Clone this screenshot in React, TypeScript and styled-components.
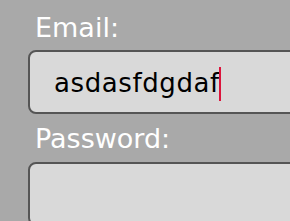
import * as React from "react";
import styled, { createGlobalStyle } from "styled-components";

const GlobalStyle = createGlobalStyle`
  html, body {
    margin: 0;
    padding: 0;
    background-color: #a9a9a9;
    overflow: hidden;
  }
`;

const StyledForm = styled.form`
  display: flex;
  flex-direction: column;
  align-items: flex-start;
  padding: 12px 0 0 28px;
  font-family: "DejaVu Sans", Verdana, sans-serif;
`;

const StyledLabel = styled.label<{ $gap: number }>`
  display: block;
  margin: ${props => props.$gap}px 0 0 7px;
  color: #ffffff;
  font-size: 27px;
  line-height: 31px;
`;

const StyledFieldWrap = styled.div<{ $gap: number }>`
  position: relative;
  margin-top: ${props => props.$gap}px;
`;

const StyledInput = styled.input`
  box-sizing: border-box;
  width: 320px;
  height: 64px;
  padding: 1px 20px 0 24px;
  background-color: #d9d9d9;
  border: 2.5px solid #555555;
  border-radius: 8px;
  color: #000000;
  font-family: "DejaVu Sans", Verdana, sans-serif;
  font-size: 26px;
  letter-spacing: 0.6px;
  caret-color: crimson;
  outline: none;
`;

// the focused caret, drawn so it shows in a still picture
const StyledCaret = styled.span<{ $left: number }>`
  position: absolute;
  top: 17px;
  left: ${props => props.$left}px;
  width: 2px;
  height: 34px;
  background-color: crimson;
`;

export default function App() {
  const [email, setEmail] = React.useState("asdasfdgdaf");
  const [password, setPassword] = React.useState("");

  return (
    <>
      <GlobalStyle />
      <StyledForm onSubmit={e => e.preventDefault()}>
        <StyledLabel $gap={0} htmlFor="email">
          Email:
        </StyledLabel>
        <StyledFieldWrap $gap={7}>
          <StyledInput
            id="email"
            type="text"
            value={email}
            onChange={e => setEmail(e.target.value)}
          />
          <StyledCaret $left={191} />
        </StyledFieldWrap>
        <StyledLabel $gap={9} htmlFor="password">
          Password:
        </StyledLabel>
        <StyledFieldWrap $gap={8}>
          <StyledInput
            id="password"
            type="password"
            value={password}
            onChange={e => setPassword(e.target.value)}
          />
        </StyledFieldWrap>
      </StyledForm>
    </>
  );
}
